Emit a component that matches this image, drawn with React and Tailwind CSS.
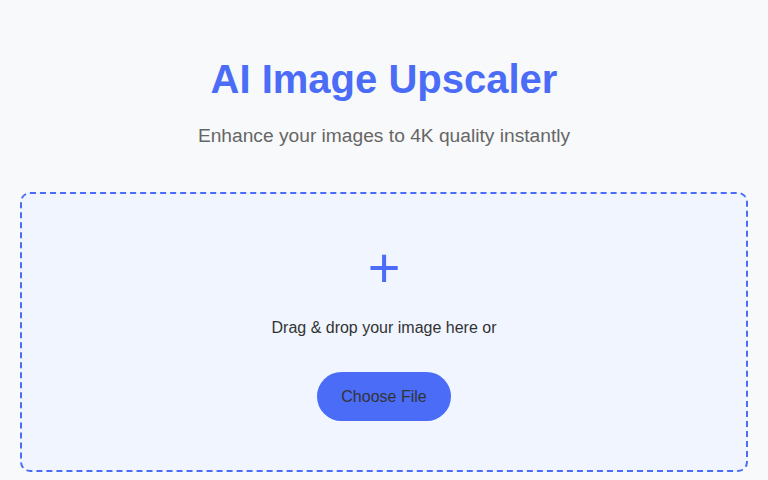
import React from 'react';

const App = () => {
  return (
    <div className="min-h-screen bg-[#f8f9fa] font-['Liberation_Sans',Arial,sans-serif]">
      <div className="mx-auto px-5 pt-[55px] pb-5">
        <h1 className="text-center text-[40px] leading-[48px] font-bold text-[#4a6cf7]">
          AI Image Upscaler
        </h1>
        <p className="mt-[22px] text-center text-[19.2px] leading-[22px] text-[#666]">
          Enhance your images to 4K quality instantly
        </p>

        <div className="mt-[45px] h-[280px] rounded-[10px] border-2 border-dashed border-[#4a6cf7] bg-[#f0f5ff] flex flex-col items-center pt-[46px]">
          <div className="text-[56px] leading-[56px] text-[#4a6cf7]">+</div>
          <p className="mt-[22px] text-[16px] leading-[19px] text-[#333]">
            Drag &amp; drop your image here or
          </p>
          <button
            type="button"
            className="mt-[35px] rounded-full bg-[#4a6cf7] px-6 py-[15px] text-[16px] leading-[19px] text-[#333]"
          >
            Choose File
          </button>
        </div>
      </div>
    </div>
  );
};

export default App;
